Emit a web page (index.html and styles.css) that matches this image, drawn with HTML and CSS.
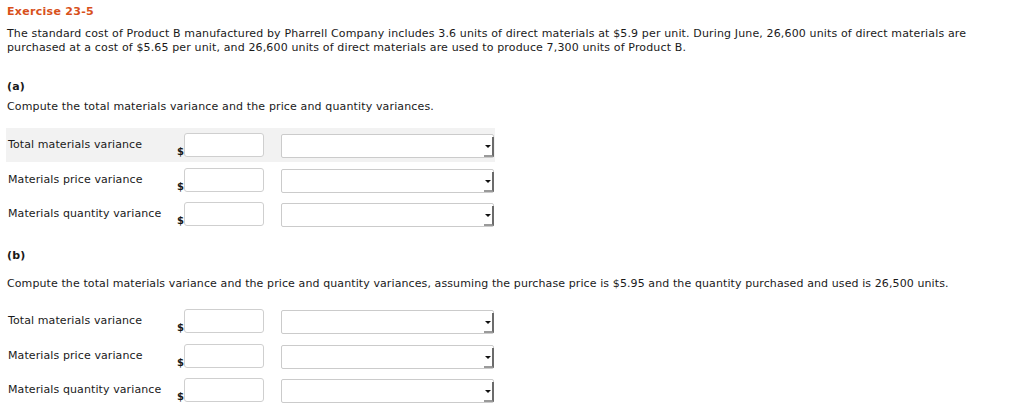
FILE: index.html
```html
<!DOCTYPE html>
<html>
<head>
<meta charset="utf-8">
<link rel="stylesheet" href="styles.css">
</head>
<body>
<div class="page">
  <div class="title">Exercise 23-5</div>
  <p class="intro">The standard cost of Product B manufactured by Pharrell Company includes 3.6 units of direct materials at $5.9 per unit. During June, 26,600 units of direct materials are purchased at a cost of $5.65 per unit, and 26,600 units of direct materials are used to produce 7,300 units of Product B.</p>

  <div class="part part-a">(a)</div>
  <p class="task task-a">Compute the total materials variance and the price and quantity variances.</p>
  <div class="grid grid-a">
    <div class="row shaded">
      <span class="label">Total materials variance</span>
      <span class="dollar">$</span><span class="box"></span>
      <span class="select"><span class="arrow"></span></span>
    </div>
    <div class="row">
      <span class="label">Materials price variance</span>
      <span class="dollar">$</span><span class="box"></span>
      <span class="select"><span class="arrow"></span></span>
    </div>
    <div class="row">
      <span class="label">Materials quantity variance</span>
      <span class="dollar">$</span><span class="box"></span>
      <span class="select"><span class="arrow"></span></span>
    </div>
  </div>

  <div class="part part-b">(b)</div>
  <p class="task task-b">Compute the total materials variance and the price and quantity variances, assuming the purchase price is $5.95 and the quantity purchased and used is 26,500 units.</p>
  <div class="grid grid-b">
    <div class="row">
      <span class="label">Total materials variance</span>
      <span class="dollar">$</span><span class="box"></span>
      <span class="select"><span class="arrow"></span></span>
    </div>
    <div class="row">
      <span class="label">Materials price variance</span>
      <span class="dollar">$</span><span class="box"></span>
      <span class="select"><span class="arrow"></span></span>
    </div>
    <div class="row">
      <span class="label">Materials quantity variance</span>
      <span class="dollar">$</span><span class="box"></span>
      <span class="select"><span class="arrow"></span></span>
    </div>
  </div>
</div>
</body>
</html>
```
FILE: styles.css
```css
html, body {
  margin: 0;
  padding: 0;
  background: #fff;
}
body {
  font-family: "DejaVu Sans", Verdana, sans-serif;
  font-size: 11px;
  line-height: 14px;
  letter-spacing: 0.14px;
  color: #1a1a1a;
}
.page {
  padding: 5px 0 0 7px;
  width: 975px;
}
.title {
  font-weight: bold;
  color: #d8501b;
  font-size: 11px;
  letter-spacing: 0.3px;
}
.intro {
  margin: 8px 0 0 0;
}
.part {
  font-weight: bold;
}
.part-a { margin-top: 25px; }
.part-b { margin-top: 18px; }
.task {
  margin: 6px 0 0 0;
}
.task-b { margin-top: 14px; letter-spacing: 0.1px; }
.grid {
  margin-left: -1px;
  width: 489px;
}
.grid-a { margin-top: 14px; }
.grid-b { margin-top: 13px; }
.row {
  display: flex;
  align-items: flex-start;
  height: 34px;
}
.row:first-child { margin-bottom: 1px; }
.shaded {
  background: #f2f2f2;
}
.label {
  width: 169px;
  padding-left: 2px;
  margin-top: 10px;
  flex: none;
  letter-spacing: 0.1px;
}
.dollar {
  width: 7px;
  margin-top: 17px;
  font-weight: bold;
  font-size: 10px;
  letter-spacing: 0;
  flex: none;
}
.box {
  flex: none;
  width: 78px;
  height: 22px;
  margin-top: 5px;
  border: 1px solid #cfcfcf;
  border-radius: 3px;
  background: #fff;
}
.select {
  flex: none;
  position: relative;
  width: 211px;
  height: 22px;
  margin-top: 6px;
  margin-left: 17px;
  border: 1px solid #cbcbcb;
  border-radius: 2px;
  background: #fff;
}
.arrow {
  position: absolute;
  right: -1px;
  top: 2px;
  width: 10px;
  height: 20px;
  border-right: 2px solid #6b6b6b;
  border-bottom: 2px solid #9a9a9a;
  box-sizing: border-box;
  background: #fff;
}
.arrow::after {
  content: "";
  position: absolute;
  left: 1px;
  top: 8px;
  border-left: 3px solid transparent;
  border-right: 3px solid transparent;
  border-top: 3px solid #111;
}
```
